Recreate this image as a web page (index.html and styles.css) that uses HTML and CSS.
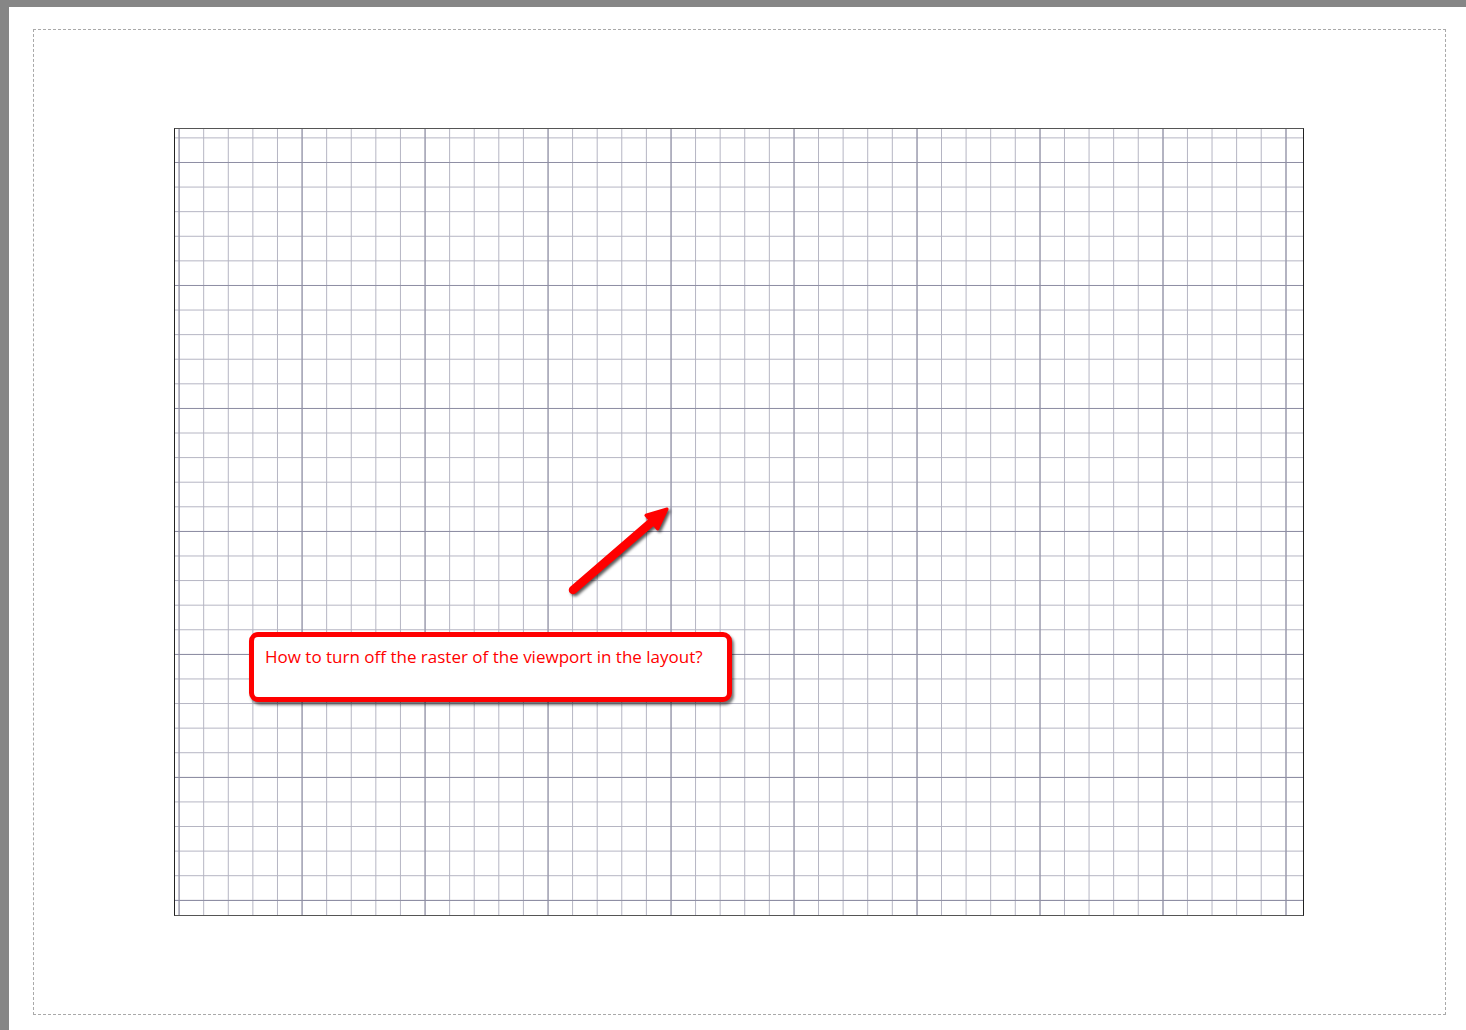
FILE: index.html
```html
<!DOCTYPE html>
<html lang="en">
<head>
    <meta charset="UTF-8">
    <title>Layout sheet</title>
    <link rel="stylesheet" href="styles.css">
</head>
<body>

    <div class="sheet">
        <!-- printable area -->
        <div class="print-area">
            <!-- viewport with the raster -->
            <div class="viewport">
                <svg class="arrow" width="1128" height="785" viewBox="0 0 1128 785">
                    <line x1="398" y1="461" x2="479" y2="391" />
                    <polygon points="492,380 482.7,399.9 470.9,386.3" />
                </svg>

                <div class="callout">
                    How to turn off the raster of the viewport in the layout?
                </div>
            </div>
        </div>
    </div>

</body>
</html>
```

FILE: styles.css
```css
html, body {
    height: 100%;
}

body {
    margin: 0;
    background: #868686;
    font-family: 'Open Sans', 'Noto Sans', sans-serif;
    overflow: hidden;
}

.sheet {
    margin: 7px 0 0 9px;
    height: calc(100% - 7px);
    background: #fff;
    padding: 22px 0 0 24px;
    box-sizing: border-box;
}

.print-area {
    width: 1413px;
    height: 986px;
    box-sizing: border-box;
    border: 1px dashed #a9a9a9;
    padding: 98px 0 0 140px;
}

/* Raster: minor every 24.6px, major every 123px */
.viewport {
    position: relative;
    width: 1128px;
    height: 786px;
    border: 1px solid #222;
    border-top-color: #555;
    border-bottom-color: #555;
    background-color: #fff;
    background-image:
        linear-gradient(to right, #8f8fa4 1px, transparent 1px),
        linear-gradient(to bottom, #8f8fa4 1px, transparent 1px),
        linear-gradient(to right, #b4b4c2 1px, transparent 1px),
        linear-gradient(to bottom, #b4b4c2 1px, transparent 1px);
    background-size:
        123px 100%,
        100% 123px,
        24.6px 100%,
        100% 24.6px;
    background-position:
        3.6px 0,
        0 33px,
        3.6px 0,
        0 8.4px;
}

.arrow {
    position: absolute;
    left: 0;
    top: 0;
    filter: drop-shadow(2px 2px 1.5px rgba(0, 0, 0, 0.65));
}

.arrow line {
    stroke: #ff0000;
    stroke-width: 8.5;
    stroke-linecap: round;
}

.arrow polygon {
    fill: #ff0000;
    stroke: #ff0000;
    stroke-width: 3;
    stroke-linejoin: round;
}

.callout {
    position: absolute;
    left: 74px;
    top: 503px;
    width: 483px;
    height: 70px;
    box-sizing: border-box;
    border: 5px solid #ff0000;
    border-radius: 9px;
    background: #fff;
    box-shadow: 2px 3px 3px rgba(0, 0, 0, 0.55);
    padding: 8px 0 0 11px;
    color: #ff0000;
    font-size: 17px;
    line-height: 23px;
    white-space: nowrap;
}
```
